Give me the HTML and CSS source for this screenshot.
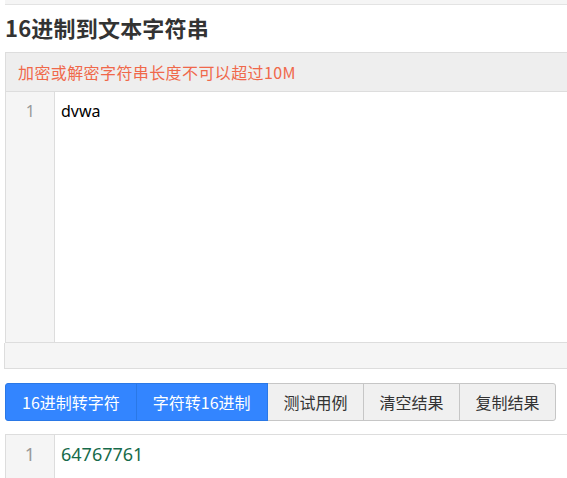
FILE: index.html
```html
<!DOCTYPE html>
<html lang="zh-CN">
<head>
<meta charset="utf-8">
<title>16进制到文本字符串</title>
<link rel="stylesheet" href="styles.css">
</head>
<body>
<div class="page">
  <div class="topbar"></div>
  <h1 class="title">16进制到文本字符串</h1>
  <div class="panel">
    <div class="panel-head">加密或解密字符串长度不可以超过10M</div>
    <div class="editor editor-input">
      <div class="gutter"><div class="ln">1</div></div>
      <div class="code"><div class="line">dvwa</div></div>
    </div>
  </div>
  <div class="statusbar"></div>
  <div class="btn-group">
    <button class="btn btn-primary">16进制转字符</button>
    <button class="btn btn-primary">字符转16进制</button>
    <button class="btn">测试用例</button>
    <button class="btn">清空结果</button>
    <button class="btn">复制结果</button>
  </div>
  <div class="editor editor-output">
    <div class="gutter"><div class="ln">1</div></div>
    <div class="code"><div class="line">64767761</div></div>
  </div>
</div>
</body>
</html>
```

FILE: styles.css
```css
html, body {
  margin: 0;
  padding: 0;
  overflow: hidden;
  background: #fff;
}
body {
  font-family: "Noto Sans", "Noto Sans CJK SC", sans-serif;
  color: #333;
}
.page {
  width: 760px;
  padding-left: 5px;
}
.topbar {
  height: 4px;
  background: #f5f5f5;
  border-bottom: 1px solid #e3e3e3;
}
.title {
  margin: 0;
  padding-top: 7px;
  height: 40px;
  box-sizing: border-box;
  font-size: 22px;
  line-height: 30px;
  font-weight: bold;
  color: #333;
  font-family: "Noto Sans CJK SC", sans-serif;
  letter-spacing: 0.2px;
}
.panel {
  margin-top: 7px;
  border: 1px solid #ddd;
  border-bottom: none;
}
.panel-head {
  height: 38px;
  line-height: 38px;
  padding-left: 12px;
  background: #eee;
  border-bottom: 1px solid #ddd;
  color: #f0684a;
  font-size: 16px;
  font-family: "Noto Sans CJK SC", sans-serif;
  letter-spacing: 0.4px;
}
.editor {
  display: flex;
  background: #fff;
}
.editor-input {
  height: 250px;
  border-bottom: 1px solid #ddd;
}
.gutter {
  width: 48px;
  background: #f5f5f5;
  border-right: 1px solid #ddd;
  flex: none;
}
.ln {
  text-align: right;
  padding-right: 19px;
  color: #999;
}
.code {
  flex: 1;
  padding-left: 6px;
}
.editor-input .gutter,
.editor-input .code {
  padding-top: 8px;
}
.editor-input .ln,
.editor-input .line {
  font-size: 16px;
  line-height: 22px;
}
.editor-input .line {
  color: #000;
}
.statusbar {
  margin-left: -1px;
  height: 25px;
  background: #f5f5f5;
  border: 1px solid #ddd;
  border-top: none;
}
.btn-group {
  display: flex;
  margin-top: 14px;
}
.btn {
  height: 38px;
  padding: 0 15px 0 16px;
  margin: 0;
  margin-left: -1px;
  font-size: 16px;
  font-family: "Noto Sans CJK SC", sans-serif;
  color: #333;
  background: #f0f0f0;
  border: 1px solid #c6c6c6;
  border-radius: 0;
  cursor: pointer;
}
.btn:first-child {
  margin-left: 0;
  border-radius: 3px 0 0 3px;
}
.btn:last-child {
  border-radius: 0 3px 3px 0;
}
.btn-primary {
  color: #fff;
  background: #3385ff;
  border-color: #2a78e6;
  padding: 0 16px;
  position: relative;
  z-index: 1;
}
.editor-output {
  margin-top: 13px;
  border: 1px solid #ddd;
  height: 60px;
}
.editor-output .gutter,
.editor-output .code {
  padding-top: 7px;
}
.editor-output .ln,
.editor-output .line {
  font-size: 18px;
  line-height: 24px;
}
.editor-output .line {
  color: #176b4a;
}
```
